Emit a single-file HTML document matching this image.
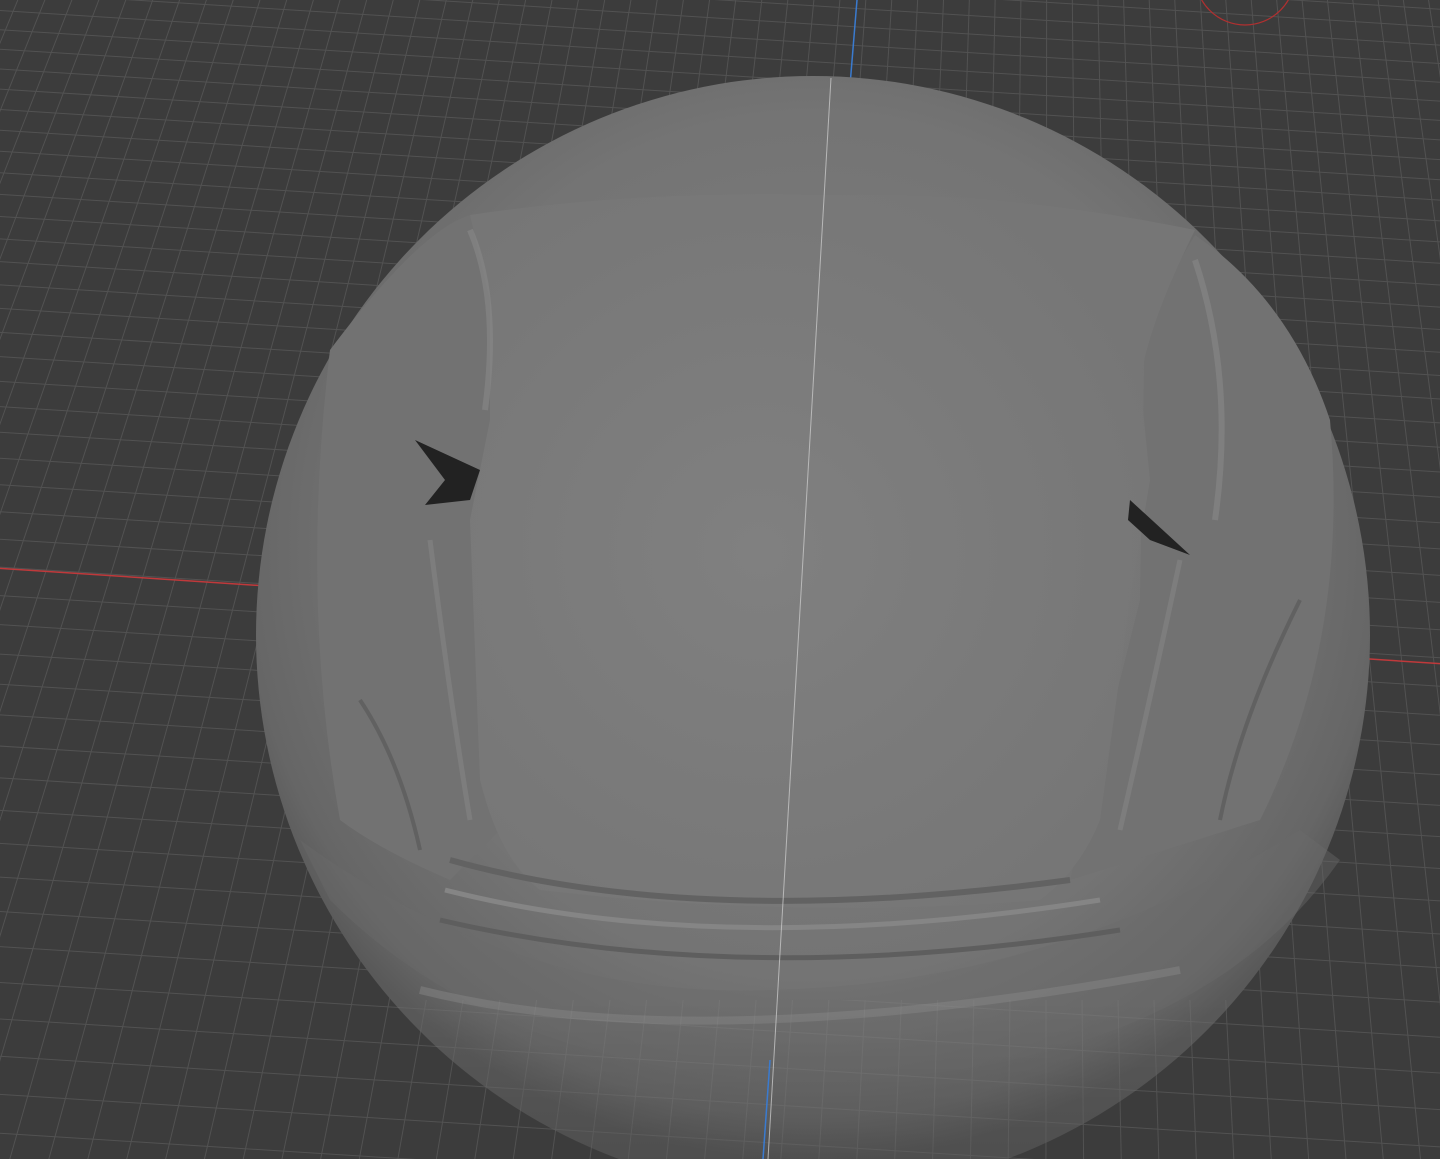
<!DOCTYPE html>
<html><head><meta charset="utf-8"><style>
html,body{margin:0;padding:0;background:#3c3c3c;overflow:hidden;width:1440px;height:1159px}
svg{display:block;position:absolute;left:0;top:0}
</style></head><body>
<svg id="s" width="1440" height="1159" viewBox="0 0 1440 1159" xmlns="http://www.w3.org/2000/svg">
<defs>
<radialGradient id="sph" cx="0.5" cy="0.42" r="0.55">
<stop offset="0" stop-color="#7f7f7f"/>
<stop offset="0.7" stop-color="#747474"/>
<stop offset="0.93" stop-color="#666"/>
<stop offset="1" stop-color="#595959"/>
</radialGradient>
<radialGradient id="flat" cx="0.4" cy="0.5" r="0.6">
<stop offset="0" stop-color="#808080"/>
<stop offset="1" stop-color="#767676"/>
</radialGradient>
<linearGradient id="fadeb" x1="0" y1="0" x2="0" y2="1">
<stop offset="0" stop-color="#000" stop-opacity="0"/>
<stop offset="1" stop-color="#000" stop-opacity="0.12"/>
</linearGradient>
<clipPath id="lower"><rect x="0" y="1000" width="1440" height="159"/></clipPath>
<clipPath id="ball"><ellipse cx="813" cy="635" rx="557" ry="559"/></clipPath>
</defs>
<rect width="1440" height="1159" fill="#3c3c3c"/>
<g id="grid" stroke="#525252" stroke-width="1" transform="rotate(3.6 720 580)"></g>
<line x1="-20" y1="567" x2="1460" y2="665" stroke="#c0393b" stroke-width="1.5"/>
<line x1="857" y1="0" x2="762" y2="1159" stroke="#3a7bd0" stroke-width="1.5"/>
<circle cx="1245" cy="-25" r="50" fill="none" stroke="#b03030" stroke-width="1.2"/>
<ellipse cx="813" cy="635" rx="557" ry="559" fill="url(#sph)"/>
<path d="M300,840 Q520,1000 770,990 Q1050,985 1300,830 L1340,860 Q1200,1060 860,1080 Q520,1090 330,900 Z" fill="#6b6b6b" opacity="0.4"/>
<path d="M330,350 Q420,230 470,215 L500,300 L490,420 L510,820 L450,880 Q380,850 340,820 Q300,600 330,350 Z" fill="#727272"/>
<path d="M1195,235 Q1290,300 1330,420 Q1350,640 1260,820 L1070,880 L1140,600 L1145,320 Z" fill="#727272"/>
<path d="M470,215 Q640,190 820,195 Q1000,190 1195,230 Q1150,320 1140,380 L1150,480 L1130,600 L1100,820 Q1080,870 1040,900 Q800,920 540,890 Q500,860 480,780 L470,520 L490,420 L490,300 Z" fill="url(#flat)"/>
<path d="M450,860 Q700,930 1070,880" stroke="#626262" stroke-width="6" fill="none"/>
<path d="M445,890 Q720,960 1100,900" stroke="#858585" stroke-width="5" fill="none"/>
<path d="M440,920 Q740,990 1120,930" stroke="#5e5e5e" stroke-width="5" fill="none"/>
<path d="M420,990 Q700,1060 1180,970" stroke="#858585" stroke-width="8" fill="none" opacity="0.5"/>
<path d="M360,700 Q400,760 420,850" stroke="#616161" stroke-width="4" fill="none"/>
<path d="M1300,600 Q1240,720 1220,820" stroke="#616161" stroke-width="4" fill="none"/>
<path d="M430,540 Q450,700 470,820" stroke="#858585" stroke-width="5" fill="none" opacity="0.6"/>
<path d="M1180,560 Q1150,700 1120,830" stroke="#858585" stroke-width="5" fill="none" opacity="0.6"/>
<path d="M470,230 Q500,300 485,410" stroke="#888" stroke-width="6" fill="none" opacity="0.6"/>
<path d="M1195,260 Q1235,380 1215,520" stroke="#888" stroke-width="6" fill="none" opacity="0.6"/>
<path d="M415,440 L480,470 L470,500 L425,505 L445,480 Z" fill="#222"/>
<path d="M1130,500 L1190,555 L1150,540 L1128,520 Z" fill="#222"/>
<g clip-path="url(#ball)">
<g clip-path="url(#lower)">
<rect x="0" y="1000" width="1440" height="159" fill="url(#fadeb)"/>
<g stroke="#9a9a9a" stroke-width="1" opacity="0.15"><g id="grid2i" transform="rotate(3.6 720 580)"></g></g>
</g></g>
<line x1="831" y1="78" x2="768" y2="1159" stroke="#c8c8c8" stroke-width="1" opacity="0.8"/>
<line x1="770" y1="1060" x2="763" y2="1159" stroke="#3a7bd0" stroke-width="1.5"/>
</svg>
<script>
var h=-2500,C=341000,vx=855,s='';
for(var y=-200;y<1400;){s+='<line x1="-300" x2="1740" y1="'+y+'" y2="'+y+'"/>';y+=Math.pow(y-h,2)/C;}
for(var i=-60;i<=60;i++){var bx=vx+i*40.5;s+='<line x1="'+(vx+(bx-vx)*(-200-h)/(1400-h))+'" y1="-200" x2="'+bx+'" y2="1400"/>';}
document.getElementById('grid').innerHTML=s;
document.getElementById('grid2i').innerHTML=s;
</script>
</body></html>
